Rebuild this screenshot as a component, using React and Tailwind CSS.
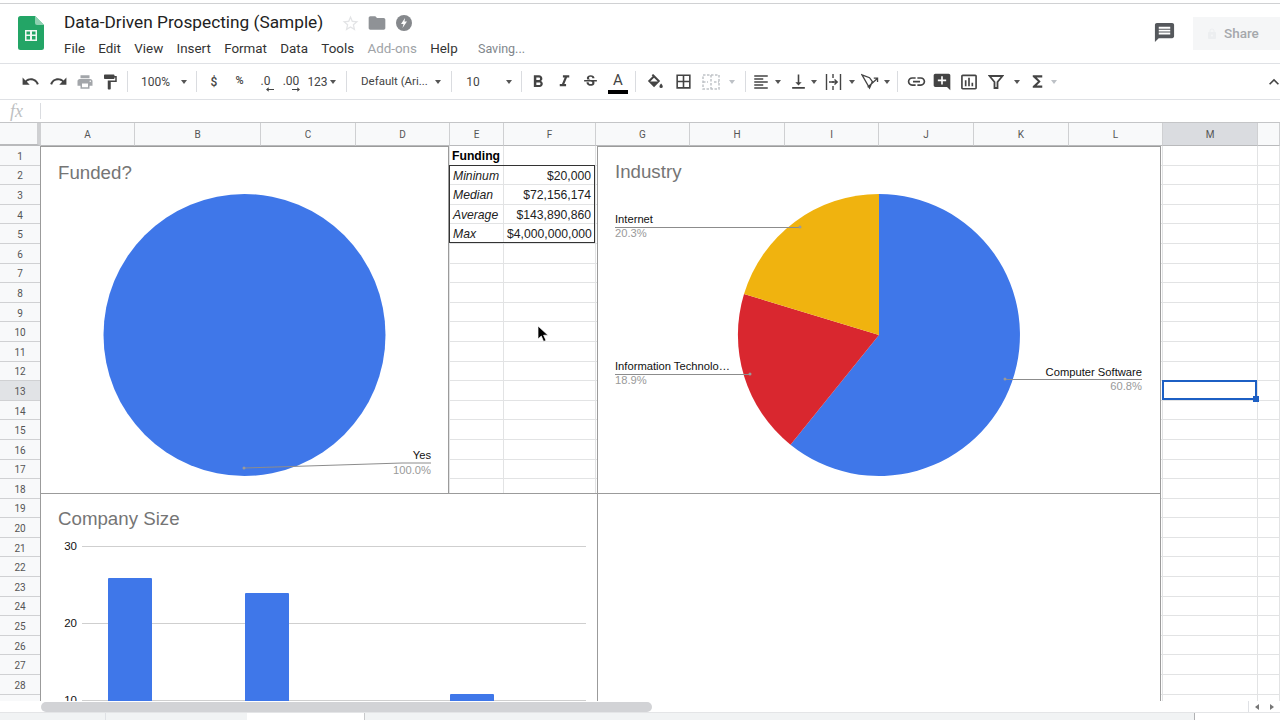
import React from 'react';
import {
  MdUndo, MdRedo, MdPrint, MdFormatPaint, MdFormatBold, MdFormatItalic, MdStrikethroughS,
  MdBorderAll, MdFormatAlignLeft, MdVerticalAlignBottom, MdInsertLink, MdAddComment,
  MdInsertChartOutlined, MdFunctions, MdStarBorder, MdFolder, MdComment, MdExpandLess, MdLock,
} from 'react-icons/md';

const columns = [
  ['', 'w'], ['A'], ['B'], ['C'], ['D'], ['E'], ['F'], ['G'], ['H'], ['I'], ['J'], ['K'], ['L'], ['M'], [''],
];
const rows = Array.from({ length: 29 }, (_, i) => i + 1);
const gridCls = 'grid grid-cols-[41px_94px_126px_95px_94px_54px_92px_94px_95px_94px_95px_95px_94px_95px_22px] grid-rows-[23px_repeat(29,19.6px)]';

const funding = {
  '1-5': { text: 'Funding', cls: 'font-bold text-black pl-[2px]' },
  '2-5': { text: 'Mininum', cls: 'italic' },
  '3-5': { text: 'Median', cls: 'italic' },
  '4-5': { text: 'Average', cls: 'italic' },
  '5-5': { text: 'Max', cls: 'italic' },
  '2-6': { text: '$20,000', cls: 'text-right pr-[4px]' },
  '3-6': { text: '$72,156,174', cls: 'text-right pr-[4px]' },
  '4-6': { text: '$143,890,860', cls: 'text-right pr-[4px]' },
  '5-6': { text: '$4,000,000,000', cls: 'text-right pr-[4px]' },
};

function Logo() {
  return (
    <svg width="26" height="34" viewBox="0 0 26 34">
      <path d="M2.5 0H17L26 9V31.5A2.5 2.5 0 0 1 23.5 34H2.5A2.5 2.5 0 0 1 0 31.5V2.5A2.5 2.5 0 0 1 2.5 0Z" fill="#23a566" />
      <path d="M17 0L26 9H19A2 2 0 0 1 17 7Z" fill="#8ed1b1" />
      <path d="M7 14H19V25H7ZM8.5 15.5V18.5H12V15.5ZM14 15.5V18.5H17.5V15.5ZM8.5 20V23.5H12V20ZM14 20V23.5H17.5V20Z" fill="#f1f8f4" fillRule="evenodd" />
    </svg>
  );
}

function Caret({ light }) {
  return (
    <span className={`w-0 h-0 border-x-[3.5px] border-x-transparent border-t-[4px] ${light ? 'border-t-[#bdc1c6]' : 'border-t-[#555]'}`} />
  );
}

function Sep({ w }) {
  return (
    <div className={`${w} flex justify-center`}>
      <div className="w-px h-[21px] bg-[#dadce0]" />
    </div>
  );
}

function Slot({ w, children, cls = '' }) {
  return <div className={`${w} h-full flex items-center justify-center ${cls}`}>{children}</div>;
}

function Toolbar() {
  return (
    <div className="h-[36px] pl-[16px] flex items-center border-b border-[#dfe1e5] text-[#444] text-[12px] shrink-0">
      <Slot w="w-[28px]"><MdUndo size={19} /></Slot>
      <Slot w="w-[28px]"><MdRedo size={19} /></Slot>
      <Slot w="w-[25px]"><MdPrint size={18} className="text-[#a3a6aa]" /></Slot>
      <Slot w="w-[26px]"><MdFormatPaint size={18} /></Slot>
      <Sep w="w-[8px]" />
      <Slot w="w-[47px]" cls="pl-[2px]">100%</Slot>
      <Slot w="w-[12px]"><Caret /></Slot>
      <Sep w="w-[12px]" />
      <Slot w="w-[24px]" cls="font-medium">$</Slot>
      <Slot w="w-[27px]" cls="text-[11px] font-medium">%</Slot>
      <Slot w="w-[25px]">
        <div className="flex flex-col items-center leading-[11px] pt-[4px]">
          <span>.0</span>
          <svg width="8" height="5" viewBox="0 0 9 5" className="ml-[9px]"><path d="M3 0L0 2.5L3 5V3H9V2H3Z" fill="#444" /></svg>
        </div>
      </Slot>
      <Slot w="w-[26px]">
        <div className="flex flex-col items-center leading-[11px] pt-[4px]">
          <span>.00</span>
          <svg width="8" height="5" viewBox="0 0 9 5" className="ml-[9px]"><path d="M6 0L9 2.5L6 5V3H0V2H6Z" fill="#444" /></svg>
        </div>
      </Slot>
      <Slot w="w-[25px]" cls="pl-[2px]">123</Slot>
      <Slot w="w-[10px]" cls="pr-[2px]"><Caret /></Slot>
      <Sep w="w-[14px]" />
      <Slot w="w-[78px]" cls="text-[11.5px] justify-start!">
        <span className="pl-[8px] whitespace-nowrap">Default (Ari...</span>
      </Slot>
      <Slot w="w-[14px]"><Caret /></Slot>
      <Sep w="w-[12px]" />
      <Slot w="w-[32px]">10</Slot>
      <Slot w="w-[27px]" cls="pl-[13px]"><Caret /></Slot>
      <Sep w="w-[10px]" />
      <Slot w="w-[24px]"><MdFormatBold size={20} /></Slot>
      <Slot w="w-[28px]"><MdFormatItalic size={19} /></Slot>
      <Slot w="w-[25px]"><MdStrikethroughS size={17} /></Slot>
      <Slot w="w-[30px]">
        <div className="flex flex-col items-center pt-[3px]">
          <span className="text-[15px] leading-[15px]">A</span>
          <span className="w-[20px] h-[4px] bg-black mt-[2px]" />
        </div>
      </Slot>
      <Sep w="w-[4px]" />
      <Slot w="w-[34px]">
        <svg width="17" height="17" viewBox="0 0 18 18" fill="#444">
          <path d="M7.5 1L9 2.5 15 8.5 8.5 15 2 8.5 7 3.5 6 2.5ZM8.5 5 4.5 9H12.5Z" fillRule="evenodd" />
          <path d="M16 11C16 11 14.2 13 14.2 14.2A1.8 1.8 0 0 0 17.8 14.2C17.8 13 16 11 16 11Z" />
        </svg>
      </Slot>
      <Slot w="w-[25px]"><MdBorderAll size={19} /></Slot>
      <Slot w="w-[30px]">
        <svg width="18" height="18" viewBox="0 0 18 18" stroke="#c0c3c7" fill="none" strokeWidth="1.5" strokeDasharray="2.5 1.5">
          <path d="M1 2H17V16H1ZM9 2V16M1 9H6M12 9H17" />
        </svg>
      </Slot>
      <Slot w="w-[12px]"><Caret light /></Slot>
      <Sep w="w-[14px]" />
      <Slot w="w-[18px]"><MdFormatAlignLeft size={18} /></Slot>
      <Slot w="w-[16px]"><Caret /></Slot>
      <Slot w="w-[24px]"><MdVerticalAlignBottom size={19} /></Slot>
      <Slot w="w-[8px]"><Caret /></Slot>
      <Slot w="w-[30px]">
        <svg width="17" height="18" viewBox="0 0 17 18" fill="none" stroke="#444" strokeWidth="1.4">
          <path d="M1.5 1V17M15.5 1V17M8 1V5M8 8V10M8 13V17M4 9H12M9.5 6.5L12.2 9L9.5 11.5" />
        </svg>
      </Slot>
      <Slot w="w-[8px]"><Caret /></Slot>
      <Slot w="w-[28px]">
        <svg width="18" height="17" viewBox="0 0 19 18" fill="none" stroke="#444" strokeWidth="1.4">
          <path d="M1 2L9 5L12 9L9 16ZM7 15L17 6M13.5 5.5H17.5V9.5" />
        </svg>
      </Slot>
      <Slot w="w-[6px]"><Caret /></Slot>
      <Sep w="w-[15px]" />
      <Slot w="w-[22px]"><MdInsertLink size={21} /></Slot>
      <Slot w="w-[30px]"><MdAddComment size={20} className="text-[#444]" /></Slot>
      <Slot w="w-[24px]"><MdInsertChartOutlined size={20} /></Slot>
      <Slot w="w-[30px]">
        <svg width="16" height="16" viewBox="0 0 16 16" fill="none" stroke="#444" strokeWidth="1.8">
          <path d="M1.5 2H14.5L9.5 8V14H6.5V8Z" />
        </svg>
      </Slot>
      <Slot w="w-[12px]"><Caret /></Slot>
      <Slot w="w-[28px]"><MdFunctions size={19} /></Slot>
      <Slot w="w-[6px]"><Caret light /></Slot>
      <div className="flex-1" />
      <MdExpandLess size={20} className="mr-[-4px]" />
    </div>
  );
}

function Header() {
  const menu = ['File', 'Edit', 'View', 'Insert', 'Format', 'Data', 'Tools'];
  return (
    <div className="h-[60px] flex items-start border-b border-[#dfe1e5] shrink-0 relative">
      <div className="pl-[18px] pt-[12px] w-[64px]"><Logo /></div>
      <div className="pt-[7px]">
        <div className="flex items-center h-[24px]">
          <span className="text-[17.25px] text-[#222] whitespace-nowrap w-[277px]">Data-Driven Prospecting (Sample)</span>
          <MdStarBorder size={19} className="text-[#e3e4e6]" />
          <MdFolder size={20} className="text-[#8f9296] ml-[7px]" />
          <svg width="16" height="16" viewBox="0 0 16 16" className="ml-[9px]">
            <circle cx="8" cy="8" r="8" fill="#85888c" />
            <path d="M9 3L5 9H7.5L6.5 13L11 6.5H8.5Z" fill="#fff" />
          </svg>
        </div>
        <div className="flex items-center gap-[13.3px] text-[13.4px] text-[#333] mt-[4px] whitespace-nowrap">
          {menu.map(m => <span key={m}>{m}</span>)}
          <span className="text-[#a0a3a7]">Add-ons</span>
          <span>Help</span>
          <span className="text-[#80868b] text-[12.5px] ml-[7px]">Saving...</span>
        </div>
      </div>
      <div className="flex-1" />
      <MdComment size={23} className="text-[#55585c] mt-[17px] mr-[17px] -scale-x-100" />
      <div className="w-[87px] h-[33px] mt-[13px] bg-[#f5f6f7] flex items-center text-[13.5px] text-[#a5a8ac] font-medium">
        <MdLock size={12} className="ml-[13px] text-[#eceef0]" />
        <span className="ml-[6px]">Share</span>
      </div>
    </div>
  );
}

function Sheet() {
  return (
    <div className="flex-1 relative overflow-hidden">
      <div className={`${gridCls} font-['Liberation_Sans',sans-serif]`}>
        {/* column headers */}
        {columns.map(([name, corner], i) => (
          <div
            key={i}
            className={`flex items-center justify-center text-[10px] text-[#555] border-b border-b-[#b9babc] border-r border-r-[#cfd0d2] font-['Roboto',sans-serif] ${name === 'M' ? 'bg-[#dadce0]' : 'bg-[#f8f9fa]'} ${corner ? 'border-r-4 border-b-2 border-r-[#bdbfc2]' : ''}`}
          >
            {name}
          </div>
        ))}
        {/* rows */}
        {rows.map(r => (
          <React.Fragment key={r}>
            <div className={`flex items-center justify-center pt-[2px] text-[10px] text-[#555] border-b border-b-[#d0d1d3] border-r border-r-[#b9babc] font-['Roboto',sans-serif] ${r === 13 ? 'bg-[#e1e3e6]' : 'bg-[#f8f9fa]'}`}>
              {r < 29 ? r : ''}
            </div>
            {columns.slice(1).map((_, c) => {
              const cell = funding[`${r}-${c + 1}`];
              return (
                <div key={c} className={`border-r border-b border-[#e2e3e4] px-[3px] text-[12.2px] leading-[21px] whitespace-nowrap text-[#222] ${cell ? cell.cls : ''}`}>
                  {cell ? cell.text : ''}
                </div>
              );
            })}
          </React.Fragment>
        ))}
      </div>
      {/* funding table outline and selected cell, on a second copy of the grid */}
      <div className={`${gridCls} absolute inset-0 pointer-events-none`}>
        <div className="col-start-6 col-span-2 row-start-3 row-span-4 border border-[#333] -translate-x-px -translate-y-px" />
        <div className="col-start-14 row-start-14 border-2 border-[#1c5fc4] relative -translate-y-px -translate-x-px">
          <span className="absolute -right-[4px] -bottom-[4px] w-[6px] h-[6px] bg-[#1c5fc4]" />
        </div>
      </div>
      <Charts />
      <svg width="12" height="18" viewBox="0 0 12 18" className="absolute left-[537px] top-[202px]">
        <path d="M1 1V14L4.3 11L6.6 16.5L9 15.4L6.6 10.2H11Z" fill="#000" stroke="#fff" strokeWidth="0.7" />
      </svg>
    </div>
  );
}

const chartFont = "font-['Liberation_Sans',sans-serif]";

function Charts() {
  return (
    <>
      {/* Funded? */}
      <div className="absolute left-[40px] top-[23px] w-[409px] h-[348px] bg-white border border-[#9b9b9b]">
        <svg width="409" height="348" viewBox="41 147 409 348" className={chartFont}>
          <text x="58" y="179" fontSize="18.7" fill="#757575">Funded?</text>
          <circle cx="244.5" cy="335" r="141" fill="#3f77e9" />
          <path d="M244 468L402 463H431" fill="none" stroke="#8c8c8c" />
          <circle cx="244" cy="468" r="1.5" fill="#9a9a9a" />
          <text x="431" y="459" fontSize="11.2" textAnchor="end" fill="#111">Yes</text>
          <text x="431" y="474" fontSize="11.2" textAnchor="end" fill="#9a9a9a">100.0%</text>
        </svg>
      </div>
      {/* Industry */}
      <div className="absolute left-[597px] top-[23px] w-[564px] h-[348px] bg-white border border-[#9b9b9b]">
        <svg width="564" height="348" viewBox="598 147 564 348" className={chartFont}>
          <text x="615" y="178" fontSize="18.7" fill="#757575">Industry</text>
          <path d="M879 335V194A141 141 0 1 1 790.5 444.8Z" fill="#3f77e9" />
          <path d="M879 335L790.5 444.8A141 141 0 0 1 744 294Z" fill="#d9272f" />
          <path d="M879 335L744 294A141 141 0 0 1 879 194Z" fill="#f0b30f" />
          <path d="M615 227.5H800M615 374.5H750M1005 379.5H1142" fill="none" stroke="#8c8c8c" />
          <circle cx="800" cy="227" r="1.5" fill="#9a9a9a" />
          <circle cx="750" cy="374" r="1.5" fill="#9a9a9a" />
          <circle cx="1005" cy="379" r="1.5" fill="#9a9a9a" />
          <text x="615" y="223" fontSize="11.2" fill="#111">Internet</text>
          <text x="615" y="237" fontSize="11.2" fill="#9a9a9a">20.3%</text>
          <text x="615" y="370" fontSize="11.2" fill="#111">Information Technolo…</text>
          <text x="615" y="384" fontSize="11.2" fill="#9a9a9a">18.9%</text>
          <text x="1142" y="376" fontSize="11.2" textAnchor="end" fill="#111">Computer Software</text>
          <text x="1142" y="390" fontSize="11.2" textAnchor="end" fill="#9a9a9a">60.8%</text>
        </svg>
      </div>
      {/* Company Size */}
      <div className="absolute left-[40px] top-[370px] w-[558px] h-[300px] bg-white border border-[#9b9b9b]">
        <svg width="558" height="300" viewBox="41 494 558 300" className={chartFont}>
          <text x="58" y="525" fontSize="18.7" fill="#757575">Company Size</text>
          <path d="M82 546.5H586M82 623.5H586M82 700.5H586" fill="none" stroke="#cfcfcf" />
          <text x="77" y="550" fontSize="11.5" textAnchor="end" fill="#111">30</text>
          <text x="77" y="627" fontSize="11.5" textAnchor="end" fill="#111">20</text>
          <text x="77" y="704" fontSize="11.5" textAnchor="end" fill="#111">10</text>
          <rect x="108" y="578" width="44" height="200" rx="1" fill="#3f77e9" />
          <rect x="245" y="593" width="44" height="200" rx="1" fill="#3f77e9" />
          <rect x="450" y="694" width="44" height="100" rx="1" fill="#3f77e9" />
        </svg>
      </div>
      {/* empty chart */}
      <div className="absolute left-[597px] top-[370px] w-[564px] h-[300px] bg-white border border-[#9b9b9b]" />
    </>
  );
}

function Footer() {
  return (
    <>
      <div className="h-[11px] flex items-center bg-white relative shrink-0">
        <div className="ml-[41px] w-[611px] h-[10px] rounded-full bg-[#d2d3d6]" />
        <div className="flex-1" />
        <div className="w-[32px] h-[11px] flex items-center justify-around border-l border-[#dfe1e5] mr-[0px]">
          <span className="w-0 h-0 border-y-[3px] border-y-transparent border-r-[4px] border-r-[#777]" />
          <span className="w-0 h-0 border-y-[3px] border-y-transparent border-l-[4px] border-l-[#777]" />
        </div>
      </div>
      <div className="h-[8px] bg-[#f1f3f4] border-t border-[#e4e5e7] flex shrink-0">
        <div className="w-[106px] border-r border-[#dfe1e5]" />
        <div className="w-[141px]" />
        <div className="w-[118px] bg-white border-r border-[#c8c9cb]" />
        <div className="flex-1" />
        <div className="w-[86px] bg-white border-l border-[#b0b1b3]" />
      </div>
    </>
  );
}

export default function App() {
  return (
    <div className="w-[1280px] h-[720px] overflow-hidden flex flex-col bg-white font-['Roboto',sans-serif]">
      <div className="h-[4px] border-b border-[#d0d1d3] shrink-0" />
      <Header />
      <Toolbar />
      <div className="h-[23px] flex items-center border-b border-[#c4c5c7] shrink-0">
        <span className="w-[40px] pl-[10px] font-['Liberation_Serif',serif] italic text-[18px] text-[#bdbfc2]">fx</span>
        <span className="w-px h-[16px] bg-[#dadce0]" />
      </div>
      <Sheet />
      <Footer />
    </div>
  );
}
